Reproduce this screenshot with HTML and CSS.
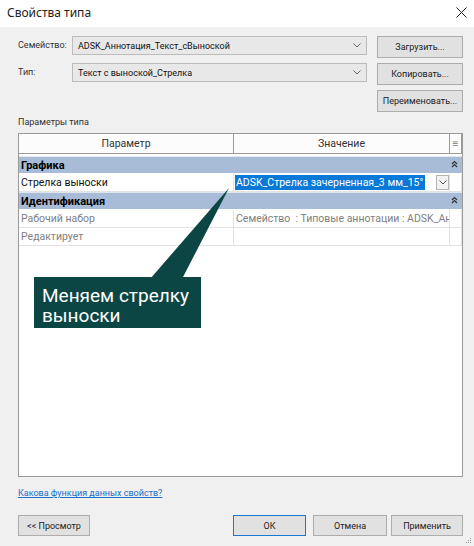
FILE: index.html
```html
<!DOCTYPE html>
<html lang="ru">
<head>
<meta charset="utf-8">
<title>Свойства типа</title>
<link rel="stylesheet" href="styles.css">
</head>
<body>
<div class="window">
  <div class="titlebar">
    <span class="title">Свойства типа</span>
    <svg class="close" width="11" height="11" viewBox="0 0 11 11"><path d="M0.5 0.5 L10.5 10.5 M10.5 0.5 L0.5 10.5" stroke="#222" stroke-width="1"/></svg>
  </div>
  <div class="dialog">
    <div class="formrow">
      <span class="label">Семейство:</span>
      <div class="combo"><span>ADSK_Аннотация_Текст_сВыноской</span><svg width="8" height="5" viewBox="0 0 8 5"><path d="M0.5 0.5 L4 4 L7.5 0.5" fill="none" stroke="#666" stroke-width="1"/></svg></div>
      <span></span>
      <div class="btn">Загрузить...</div>
    </div>
    <div class="formrow">
      <span class="label">Тип:</span>
      <div class="combo"><span>Текст с выноской_Стрелка</span><svg width="8" height="5" viewBox="0 0 8 5"><path d="M0.5 0.5 L4 4 L7.5 0.5" fill="none" stroke="#666" stroke-width="1"/></svg></div>
      <span></span>
      <div class="btn">Копировать...</div>
    </div>
    <div class="formrow">
      <span></span><span></span><span></span>
      <div class="btn">Переименовать...</div>
    </div>
    <div class="section">Параметры типа</div>
    <div class="table">
      <div class="thead">
        <div class="th">Параметр</div>
        <div class="th">Значение</div>
        <div class="th th-icon">≡</div>
      </div>
      <div class="group">
        <span>Графика</span>
        <svg class="collapse" width="7" height="8" viewBox="0 0 7 8"><path d="M1 4 L3.5 1.5 L6 4 M1 7 L3.5 4.5 L6 7" fill="none" stroke="#333" stroke-width="1.2"/></svg>
      </div>
      <div class="row">
        <div class="cell">Стрелка выноски</div>
        <div class="cell value">
          <span class="selected">ADSK_Стрелка зачерненная_3 мм_15°</span>
          <div class="dd"><svg width="8" height="5" viewBox="0 0 8 5"><path d="M0.5 0.5 L4 4 L7.5 0.5" fill="none" stroke="#555" stroke-width="1"/></svg></div>
        </div>
        <div class="cell"></div>
      </div>
      <div class="group">
        <span>Идентификация</span>
        <svg class="collapse" width="7" height="8" viewBox="0 0 7 8"><path d="M1 4 L3.5 1.5 L6 4 M1 7 L3.5 4.5 L6 7" fill="none" stroke="#333" stroke-width="1.2"/></svg>
      </div>
      <div class="row muted">
        <div class="cell">Рабочий набор</div>
        <div class="cell clip">Семейство&nbsp; : Типовые аннотации : ADSK_Аннотация_Текст_сВыноской</div>
        <div class="cell"></div>
      </div>
      <div class="row muted">
        <div class="cell">Редактирует</div>
        <div class="cell"></div>
        <div class="cell"></div>
      </div>
    </div>
    <a class="link" href="#">Какова функция данных свойств?</a>
    <div class="buttons">
      <div class="btn btn-preview">&lt;&lt; Просмотр</div>
      <div class="spacer"></div>
      <div class="btn btn-ok">ОК</div>
      <div class="btn btn-cancel">Отмена</div>
      <div class="btn btn-apply">Применить</div>
    </div>
  </div>
  <svg class="grip" width="6" height="6" viewBox="0 0 6 6"><rect x="4" y="0" width="1" height="1" fill="#999"/><rect x="2" y="2" width="1" height="1" fill="#999"/><rect x="4" y="2" width="1" height="1" fill="#999"/><rect x="0" y="4" width="1" height="1" fill="#999"/><rect x="2" y="4" width="1" height="1" fill="#999"/><rect x="4" y="4" width="1" height="1" fill="#999"/></svg>
  <svg class="pointer" width="474" height="546" viewBox="0 0 474 546"><polygon points="150,279 182,279 229,188" fill="#0c4644"/></svg>
  <div class="callout">Меняем стрелку<br>выноски</div>
</div>
</body>
</html>
```
FILE: styles.css
```css
* { box-sizing: border-box; }
html, body { margin: 0; padding: 0; }
body {
  width: 474px;
  height: 546px;
  font-family: Roboto, "Noto Sans", sans-serif;
  font-size: 9px;
  color: #000;
  overflow: hidden;
}
.window {
  position: relative;
  width: 474px;
  height: 546px;
  background: #f0f0f0;
  display: flex;
  flex-direction: column;
}
.titlebar {
  height: 27px;
  background: #fff;
  display: flex;
  align-items: center;
  justify-content: space-between;
  padding: 0 7px 2px 7px;
}
.title { font-family: "Noto Sans", sans-serif; font-size: 12px; color: #222; }
.dialog {
  flex: 1;
  display: flex;
  flex-direction: column;
  padding: 9px 11px 0 18px;
}
.formrow {
  display: grid;
  grid-template-columns: 54px 295px 10px 86px;
  height: 22px;
  margin-bottom: 5px;
  align-items: start;
}
.formrow:nth-child(3) { margin-bottom: 0; }
.label { line-height: 19px; color: #333; white-space: nowrap; }
.combo {
  height: 19px;
  background: #e8e8e8;
  border: 1px solid #bcbcbc;
  display: flex;
  align-items: center;
  justify-content: space-between;
  padding: 0 5px 0 5px;
  color: #111;
}
.btn {
  height: 22px;
  background: #e1e1e1;
  border: 1px solid #adadad;
  display: flex;
  align-items: center;
  justify-content: center;
  color: #222;
  white-space: nowrap;
}
.section {
  margin-top: 3px;
  line-height: 14px;
  height: 14px;
  color: #333;
}
.table {
  margin-top: 4px;
  height: 344px;
  background: #fff;
  border: 1px solid #9a9a9a;
  font-size: 10.5px;
  display: flex;
  flex-direction: column;
}
.thead {
  display: grid;
  grid-template-columns: 215px 216px 12px;
  height: 20px;
  margin-bottom: 2px;
}
.th {
  border-right: 1px solid #9a9a9a;
  border-bottom: 1px solid #9a9a9a;
  display: flex;
  align-items: center;
  justify-content: center;
  color: #333;
  background: #fcfcfc;
}
.th-icon { font-size: 10px; color: #777; }
.group {
  height: 17px;
  width: 443px;
  background: #a8bcd7;
  display: flex;
  align-items: center;
  justify-content: space-between;
  padding: 0 4px 0 2px;
  font-weight: bold;
  font-size: 11px;
  margin-bottom: 1px;
  border-top: 1px solid #dfe6ef;
}
.collapse { margin-top: -2px; }
.row {
  display: grid;
  grid-template-columns: 215px 216px 12px;
  height: 18px;
  border-bottom: 1px solid #e2e2e2;
}
.cell {
  border-right: 1px solid #e2e2e2;
  padding: 0 2px;
  line-height: 17px;
  white-space: nowrap;
  overflow: hidden;
  color: #111;
}
.clip { text-overflow: clip; }
.muted .cell { color: #808080; }
.value {
  display: flex;
  align-items: center;
  padding: 0 0 0 1px;
}
.selected {
  background: #0a78d7;
  color: #fff;
  line-height: 15px;
  padding: 0 2px 0 1px;
  flex: none;
}
.dd {
  margin-left: auto;
  margin-right: 0;
  width: 13px;
  height: 15px;
  border: 1px solid #b4b4b4;
  background: #f2f2f2;
  display: flex;
  align-items: center;
  justify-content: center;
}
.link {
  margin-top: 9px;
  line-height: 14px;
  color: #1a6fc9;
  text-decoration: underline;
  align-self: flex-start;
}
.buttons {
  margin-top: 15px;
  display: flex;
  height: 21px;
}
.buttons .btn { height: 21px; }
.btn-preview { width: 72px; }
.spacer { flex: 1; }
.btn-ok { width: 73px; border: 1px solid #1a78d4; margin-right: 7px; }
.btn-cancel { width: 74px; margin-right: 4px; }
.btn-apply { width: 72px; }
.grip { position: absolute; right: 2px; bottom: 2px; }
.pointer { position: absolute; left: 0; top: 0; pointer-events: none; }
.callout {
  position: absolute;
  left: 34px;
  top: 277px;
  width: 167px;
  height: 51px;
  background: #0c4644;
  color: #fff;
  font-family: Roboto, "Noto Sans", sans-serif;
  font-size: 19px;
  line-height: 20px;
  padding: 9px 0 0 8px;
}
```
